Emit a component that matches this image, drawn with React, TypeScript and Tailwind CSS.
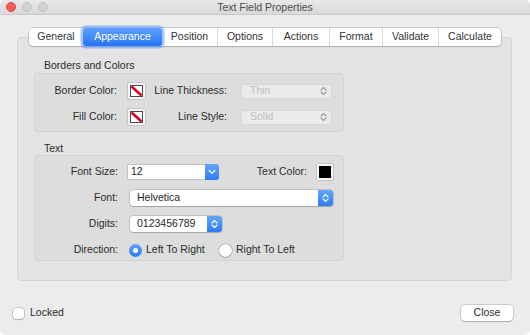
import React from "react";

const tabs = [
  { name: "General", w: "w-[54px]" },
  { name: "Appearance", w: "w-[79px]" },
  { name: "Position", w: "w-[55px]" },
  { name: "Options", w: "w-[55px]" },
  { name: "Actions", w: "w-[57px]" },
  { name: "Format", w: "w-[53px]" },
  { name: "Validate", w: "w-[56px]" },
  { name: "Calculate", w: "w-[63px]" },
];

const UpDown = ({ color }: { color: string }) => (
  <svg width="7" height="10" viewBox="0 0 7 10" fill="none">
    <path d="M1 4 L3.5 1.5 L6 4" stroke={color} strokeWidth="1.1" strokeLinecap="round" strokeLinejoin="round" />
    <path d="M1 6 L3.5 8.5 L6 6" stroke={color} strokeWidth="1.1" strokeLinecap="round" strokeLinejoin="round" />
  </svg>
);

const Down = () => (
  <svg width="8" height="6" viewBox="0 0 8 6" fill="none">
    <path d="M1.2 1.5 L4 4.3 L6.8 1.5" stroke="#fff" strokeWidth="1.3" strokeLinecap="round" strokeLinejoin="round" />
  </svg>
);

// swatch showing "no colour" (white box with red slash)
const NoColor = () => (
  <div className="w-[19px] h-[18px] bg-[#f6f6f6] border border-[#c6c6c6] rounded-[2px] flex items-center justify-center">
    <svg width="13" height="12" viewBox="0 0 13 12">
      <rect x="0.5" y="0.5" width="12" height="11" fill="#fff" stroke="#4a4a4a" />
      <line x1="1.5" y1="1.5" x2="11.5" y2="10.5" stroke="#d0021b" strokeWidth="2.6" />
    </svg>
  </div>
);

const DisabledSelect = ({ value }: { value: string }) => (
  <div className="ml-[14px] w-[91px] h-[15px] bg-[#ebebeb] border border-[#d6d6d6] rounded-[3px] flex items-center justify-between pl-[8px] pr-[4px] text-[#bfbfbf]">
    <span>{value}</span>
    <UpDown color="#9c9c9c" />
  </div>
);

const BlueSelect = ({ value, w }: { value: string; w: string }) => (
  <div className={`ml-[12px] ${w} h-[16px] flex rounded-[3px] bg-white shadow-[0_0_0_0.5px_rgba(0,0,0,0.25),0_1px_1px_rgba(0,0,0,0.15)]`}>
    <div className="flex-1 pl-[7px] flex items-center text-[#262626]">{value}</div>
    <div className="w-[15px] rounded-r-[3px] bg-gradient-to-b from-[#64a6fd] to-[#2a7cf5] flex items-center justify-center">
      <UpDown color="#fff" />
    </div>
  </div>
);

export default function App() {
  return (
    <div className="w-[530px] h-[335px] bg-white font-['Liberation_Sans',Arial,sans-serif] text-[10.5px] text-[#2b2b2b]">
      <div className="h-full bg-[#ececec] rounded-[5px] overflow-hidden flex flex-col">
        {/* title bar */}
        <div className="h-[15px] grid grid-cols-[1fr_auto_1fr] items-center bg-gradient-to-b from-[#e8e8e8] to-[#d9d9d9] border-b border-[#cacaca]">
          <div className="flex items-center gap-[6px] pl-[6px]">
            <div className="w-[10px] h-[10px] rounded-full bg-[#fc5f57] border border-[#e0443e]" />
            <div className="w-[10px] h-[10px] rounded-full bg-[#d3d3d3] border border-[#c2c2c2]" />
            <div className="w-[10px] h-[10px] rounded-full bg-[#d3d3d3] border border-[#c2c2c2]" />
          </div>
          <div className="text-[#4d4d4d] leading-none">Text Field Properties</div>
          <div />
        </div>

        {/* tabs */}
        <div className="mt-[13px] relative z-10 flex justify-center">
          <div className="flex h-[18px] bg-white rounded-[4px] shadow-[0_0_0_0.5px_rgba(0,0,0,0.28),0_1px_1px_rgba(0,0,0,0.12)]">
            {tabs.map((t, i) =>
              t.name === "Appearance" ? (
                <div
                  key={t.name}
                  className={`${t.w} flex items-center justify-center text-white bg-gradient-to-b from-[#5da0fc] to-[#2673f4] rounded-[3px] shadow-[0_0_0_2.5px_rgba(92,152,246,0.55)]`}
                >
                  {t.name}
                </div>
              ) : (
                <div
                  key={t.name}
                  className={`${t.w} flex items-center justify-center text-[#333] ${i > 2 ? "border-l border-[#dadada]" : ""}`}
                >
                  {t.name}
                </div>
              )
            )}
          </div>
        </div>

        {/* tab content */}
        <div className="-mt-[9px] ml-[17px] w-[495px] h-[244px] bg-[#e3e3e3] border border-[#d5d5d5] rounded-[4px] pt-[21px] pl-[16px]">
          <div className="ml-[10px] h-[14px] flex items-center">Borders and Colors</div>
          <div className="w-[310px] h-[59px] bg-[#dddddd] border border-[#d2d2d2] rounded-[4px] pt-[8px]">
            <div className="flex items-center h-[18px]">
              <div className="w-[82px] text-right">Border Color:</div>
              <div className="ml-[10px]"><NoColor /></div>
              <div className="w-[81px] text-right">Line Thickness:</div>
              <DisabledSelect value="Thin" />
            </div>
            <div className="flex items-center h-[18px] mt-[8px]">
              <div className="w-[82px] text-right">Fill Color:</div>
              <div className="ml-[10px]"><NoColor /></div>
              <div className="w-[81px] text-right">Line Style:</div>
              <DisabledSelect value="Solid" />
            </div>
          </div>

          <div className="ml-[10px] mt-[10px] h-[13px] flex items-center">Text</div>
          <div className="w-[310px] h-[106px] bg-[#dddddd] border border-[#d2d2d2] rounded-[4px] pt-[7px] flex flex-col gap-[8px]">
            <div className="flex items-center h-[18px]">
              <div className="w-[83px] text-right">Font Size:</div>
              <div className="ml-[9px] w-[92px] h-[16px] flex">
                <div className="flex-1 bg-white border border-[#c4c4c4] border-r-0 pl-[3px] flex items-center text-[#262626]">12</div>
                <div className="w-[14px] rounded-r-[3px] bg-gradient-to-b from-[#64a6fd] to-[#2a7cf5] flex items-center justify-center">
                  <Down />
                </div>
              </div>
              <div className="w-[88px] text-right">Text Color:</div>
              <div className="ml-[9px] w-[18px] h-[18px] bg-[#f6f6f6] border border-[#c6c6c6] rounded-[2px] flex items-center justify-center">
                <div className="w-[12px] h-[12px] bg-black" />
              </div>
            </div>
            <div className="flex items-center h-[18px]">
              <div className="w-[83px] text-right">Font:</div>
              <BlueSelect value="Helvetica" w="w-[203px]" />
            </div>
            <div className="flex items-center h-[18px]">
              <div className="w-[83px] text-right">Digits:</div>
              <BlueSelect value="0123456789" w="w-[92px]" />
            </div>
            <div className="flex items-center h-[18px]">
              <div className="w-[83px] text-right">Direction:</div>
              <div className="ml-[11px] w-[90px] flex items-center">
                <div className="w-[13px] h-[13px] rounded-full bg-gradient-to-b from-[#5da0fc] to-[#2a7cf5] flex items-center justify-center">
                  <div className="w-[5px] h-[5px] rounded-full bg-white" />
                </div>
                <span className="ml-[4px]">Left To Right</span>
              </div>
              <div className="w-[13px] h-[13px] rounded-full bg-white shadow-[0_0_0_0.5px_rgba(0,0,0,0.3),0_1px_1px_rgba(0,0,0,0.12)]" />
              <span className="ml-[4px]">Right To Left</span>
            </div>
          </div>
        </div>

        {/* bottom */}
        <div className="mt-[24px] h-[16px] flex items-center justify-between pl-[13px] pr-[17px]">
          <div className="flex items-center">
            <div className="w-[11px] h-[11px] bg-white rounded-[3px] shadow-[0_0_0_0.5px_rgba(0,0,0,0.3),0_1px_1px_rgba(0,0,0,0.12)]" />
            <span className="ml-[6px]">Locked</span>
          </div>
          <div className="w-[52px] h-[16px] bg-white rounded-[4px] flex items-center justify-center text-[#2b2b2b] shadow-[0_0_0_0.5px_rgba(0,0,0,0.28),0_1px_1px_rgba(0,0,0,0.15)]">
            Close
          </div>
        </div>
      </div>
    </div>
  );
}
